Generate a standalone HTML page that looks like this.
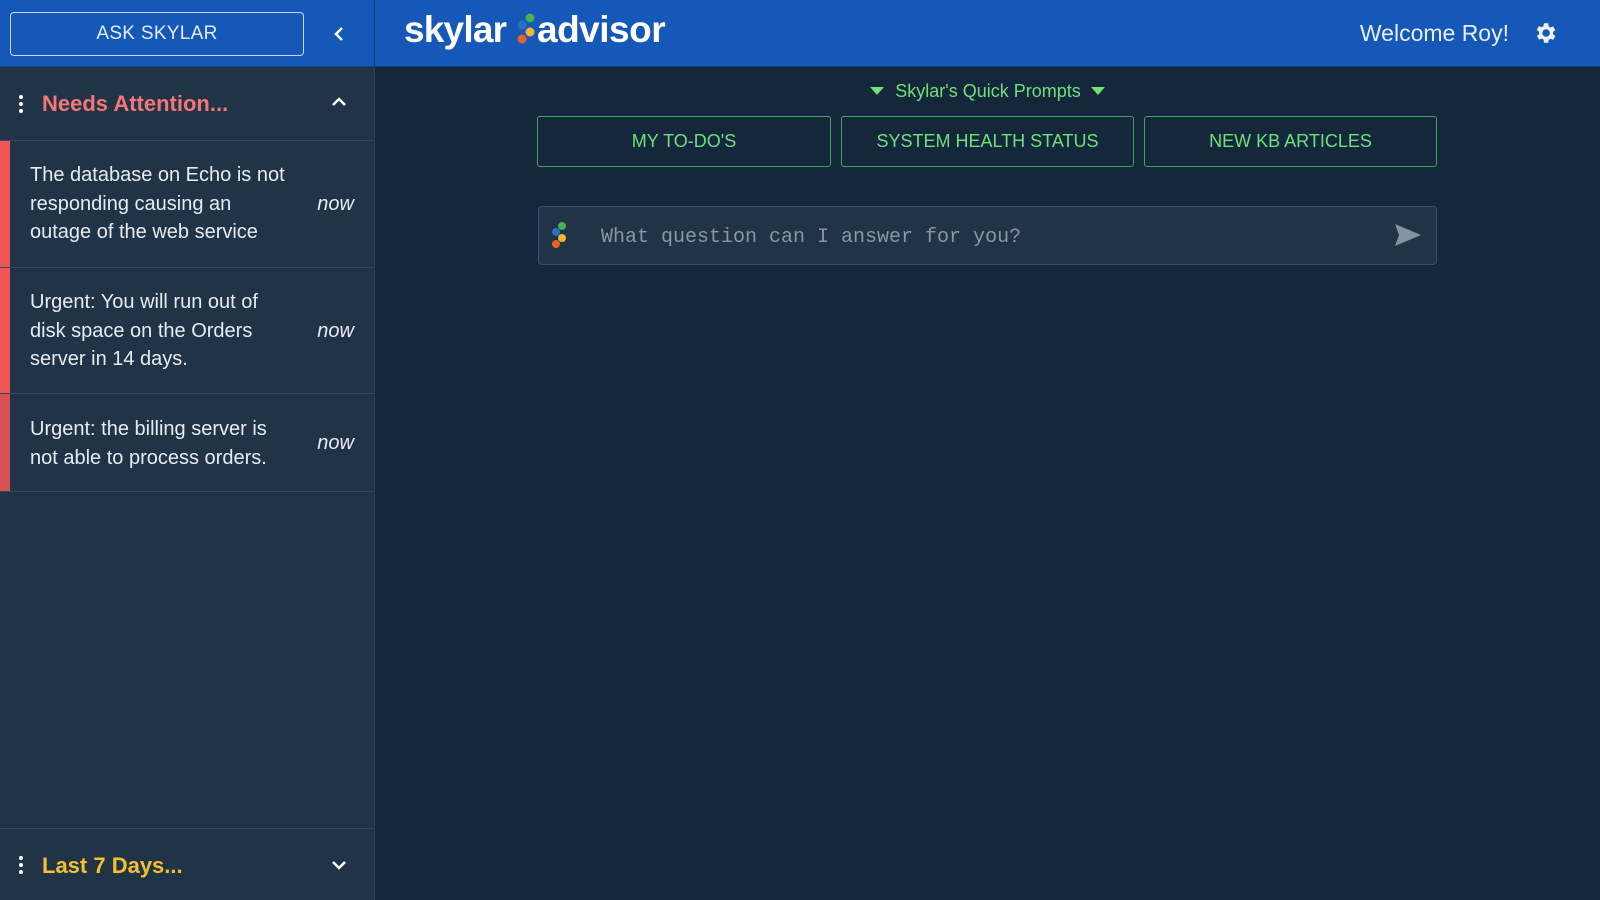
<!DOCTYPE html>
<html><head><meta charset="utf-8"><style>
*{box-sizing:border-box;margin:0;padding:0}
body{width:1600px;height:900px;overflow:hidden;background:#15273b;font-family:"Liberation Sans",sans-serif;position:relative}
.hdr{position:absolute;left:0;top:0;width:1600px;height:67px;background:#1558b8;border-bottom:1px solid #0f3f85}
.side{position:absolute;left:0;top:67px;width:375px;height:833px;background:#213347;border-right:1px solid #2d4258}
.ask{position:absolute;left:10px;top:12px;width:294px;height:44px;border:1px solid #c8d8f0;border-radius:4px;color:#e4ecf8;font-size:19px;text-align:center;line-height:42px;letter-spacing:.3px}
.sep{position:absolute;left:374px;top:0;width:1px;height:67px;background:#0f3f85}
.sec{position:absolute;left:0;width:374px;border-bottom:1px solid #34485e}
.dots{position:absolute;left:19px;width:5px}
.dots i{display:block;width:4px;height:4px;border-radius:50%;background:#fff;margin-bottom:3px}
.item{position:absolute;left:0;width:374px;border-bottom:1px solid #34485e;color:#e6ecf2;font-size:20px;line-height:28.5px}
.item .bar{position:absolute;left:0;top:0;bottom:0;width:10px;background:#f25656}
.item .t{position:absolute;left:30px;width:260px}
.item .n{position:absolute;right:20px;font-style:italic}
.btn{position:absolute;top:116px;height:51px;border:1px solid #3fa35a;border-radius:3px;color:#6fe07c;font-size:18px;text-align:center;line-height:49px}
</style></head><body>
<div class="hdr">
 <div class="ask">ASK SKYLAR</div>
 <svg style="position:absolute;left:333px;top:26px" width="12" height="16"><path d="M9 2 L3 8 L9 14" stroke="#fff" stroke-width="2.5" fill="none"/></svg>
 <div class="sep"></div>
 <div style="position:absolute;left:404px;top:9px;color:#fff;font-size:37px;font-weight:bold;letter-spacing:-0.8px">skylar</div>
 <svg style="position:absolute;left:513px;top:12px" width="24" height="34"><circle cx="17" cy="6" r="4.5" fill="#4caf50"/><circle cx="9" cy="13" r="4.5" fill="#2f6fc0"/><circle cx="17" cy="20" r="4.5" fill="#f2b632"/><circle cx="9" cy="27" r="4.5" fill="#e8622c"/></svg>
 <div style="position:absolute;left:537px;top:9px;color:#fff;font-size:37px;font-weight:bold;letter-spacing:-0.5px">advisor</div>
 <div style="position:absolute;right:91px;top:20px;color:#e6eef9;font-size:23px">Welcome Roy!</div>
 <svg style="position:absolute;left:1532px;top:20px" width="26" height="26" viewBox="0 0 24 24"><path fill="#eef3fb" d="M19.4 13a7.5 7.5 0 0 0 0-2l2.1-1.6-2-3.5-2.5 1a7 7 0 0 0-1.7-1L15 3h-4l-.4 2.7a7 7 0 0 0-1.7 1l-2.5-1-2 3.5L6.6 11a7.5 7.5 0 0 0 0 2l-2.1 1.6 2 3.5 2.5-1a7 7 0 0 0 1.7 1L11 21h4l.4-2.7a7 7 0 0 0 1.7-1l2.5 1 2-3.5zM13 15.5a3.5 3.5 0 1 1 0-7 3.5 3.5 0 0 1 0 7z"/></svg>
</div>
<div class="side">
 <div class="sec" style="top:0;height:74px">
  <div class="dots" style="top:28px"><i></i><i></i><i></i></div>
  <div style="position:absolute;left:42px;top:24px;color:#f47777;font-size:22px;font-weight:bold">Needs Attention...</div>
  <svg style="position:absolute;left:331px;top:29px" width="16" height="12"><path d="M2 9 L8 3 L14 9" stroke="#fff" stroke-width="2.5" fill="none"/></svg>
 </div>
 <div class="item" style="top:74px;height:127px"><div class="bar"></div><div class="t" style="top:20px">The database on Echo is not responding causing an outage of the web service</div><div class="n" style="top:49px">now</div></div>
 <div class="item" style="top:201px;height:126px"><div class="bar"></div><div class="t" style="top:20px">Urgent: You will run out of disk space on the Orders server in 14 days.</div><div class="n" style="top:49px">now</div></div>
 <div class="item" style="top:327px;height:98px"><div class="bar" style="background:#d75353"></div><div class="t" style="top:21px">Urgent: the billing server is not able to process orders.</div><div class="n" style="top:35px">now</div></div>
 <div class="sec" style="top:761px;height:72px;border-top:1px solid #34485e;border-bottom:none">
  <div class="dots" style="top:27px"><i></i><i></i><i></i></div>
  <div style="position:absolute;left:42px;top:24px;color:#f2c12e;font-size:22px;font-weight:bold">Last 7 Days...</div>
  <svg style="position:absolute;left:331px;top:30px" width="16" height="12"><path d="M2 3 L8 9 L14 3" stroke="#fff" stroke-width="2.5" fill="none"/></svg>
 </div>
</div>
<svg style="position:absolute;left:870px;top:87px" width="14" height="9"><path d="M0 0 H14 L7 8 Z" fill="#6fe07c"/></svg>
<div style="position:absolute;left:889px;top:80px;width:198px;color:#6fe07c;font-size:18px;text-align:center;line-height:22px">Skylar's Quick Prompts</div>
<svg style="position:absolute;left:1091px;top:87px" width="14" height="9"><path d="M0 0 H14 L7 8 Z" fill="#6fe07c"/></svg>
<div class="btn" style="left:537px;width:294px">MY TO-DO'S</div>
<div class="btn" style="left:841px;width:293px">SYSTEM HEALTH STATUS</div>
<div class="btn" style="left:1144px;width:293px">NEW KB ARTICLES</div>
<div style="position:absolute;left:538px;top:206px;width:899px;height:59px;background:#213347;border:1px solid #3c506a;border-radius:4px">
 <svg style="position:absolute;left:10px;top:14px" width="20" height="30"><circle cx="13" cy="5" r="4" fill="#4caf50"/><circle cx="7" cy="11" r="4" fill="#2f6fc0"/><circle cx="13" cy="17" r="4" fill="#f2b632"/><circle cx="7" cy="23" r="4" fill="#e8622c"/></svg>
 <div style="position:absolute;left:62px;top:19px;font-family:'Liberation Mono',monospace;font-size:20px;color:#8a96a3">What question can I answer for you?</div>
 <svg style="position:absolute;left:855px;top:16px" width="28" height="26"><path d="M1 1 L27 12 L1 23 L5 12 Z" fill="#8593a2"/></svg>
</div>
</body></html>
